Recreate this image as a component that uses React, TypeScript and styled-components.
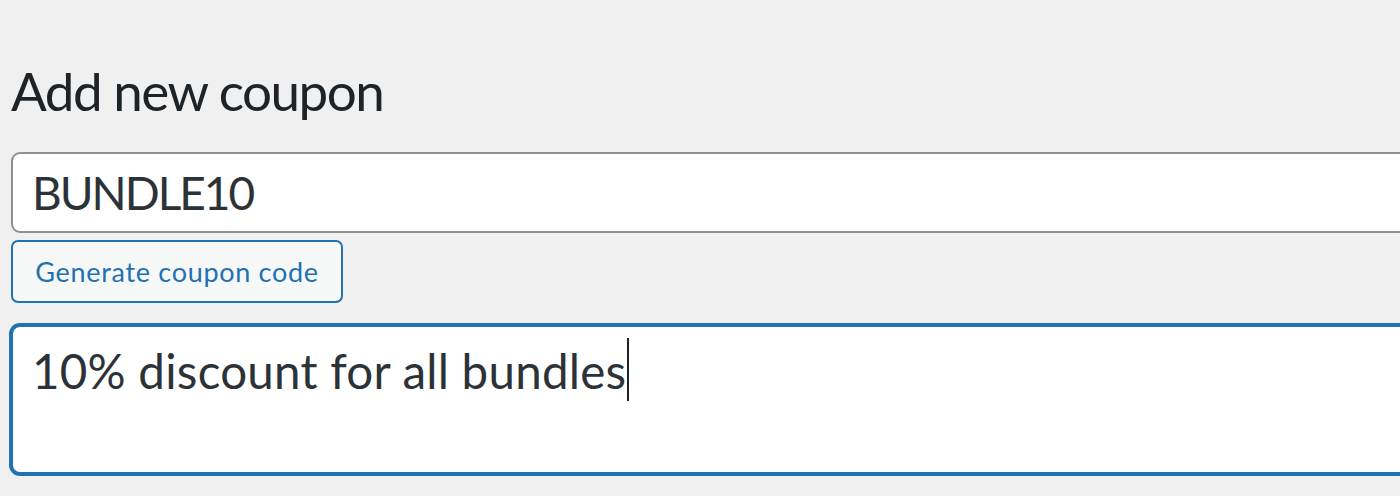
import { createGlobalStyle, styled } from "styled-components";

const GlobalStyle = createGlobalStyle`
    html, body {
        margin: 0;
        padding: 0;
        background: #f0f0f1;
        overflow: hidden;
    }
    #root {
        height: 496px;
        overflow: hidden;
    }
`;

const Page = styled.main`
    width: 1500px;
    padding: 58.5px 0 0 11px;
    font-family: Lato, "Open Sans", sans-serif;
    color: #1d2327;
`;

const Heading = styled.h1`
    margin: 0 0 29px 0;
    font-size: 53px;
    line-height: 64px;
    font-weight: 400;
    letter-spacing: -1.5px;
    color: #1d2327;
`;

const Field = styled.div`
    display: flex;
    flex-direction: column;
    align-items: flex-start;
`;

const CodeInput = styled.input`
    box-sizing: border-box;
    width: 100%;
    height: 81px;
    margin: 0;
    padding: 0 19px;
    border: 2px solid #8c8f94;
    border-radius: 9px;
    background: #fff;
    font-family: inherit;
    font-size: 46px;
    letter-spacing: -2px;
    color: #2c3338;
    outline: none;
`;

const SecondaryButton = styled.button`
    box-sizing: border-box;
    width: 332px;
    height: 63px;
    margin: 7.5px 0 0 0;
    padding: 0 10px;
    border: 2px solid #2271b1;
    border-radius: 7px;
    background: #f6f7f7;
    color: #2271b1;
    font-family: inherit;
    font-size: 27px;
    letter-spacing: 0.7px;
    line-height: 1;
    text-align: center;
    cursor: pointer;
`;

const Description = styled.div<{ $focused?: boolean }>`
    box-sizing: border-box;
    width: 100%;
    height: 149px;
    margin-top: 22px;
    padding: 11px 19px;
    border: 2px solid ${(p) => (p.$focused ? "#2271b1" : "#8c8f94")};
    border-radius: 9px;
    box-shadow: ${(p) => (p.$focused ? "0 0 0 2px #2271b1" : "none")};
    background: #fff;
    font-size: 47.5px;
    line-height: 57px;
    letter-spacing: 0.25px;
    color: #2c3338;
    white-space: pre-wrap;
`;

const Caret = styled.span`
    display: inline-block;
    width: 2px;
    height: 63px;
    margin-left: 1px;
    vertical-align: -12px;
    background: #1d2327;
`;

export default function App() {
    return (
        <>
            <GlobalStyle />
            <Page>
                <Heading>Add new coupon</Heading>
                <Field>
                    <CodeInput
                        type="text"
                        aria-label="Coupon code"
                        defaultValue="BUNDLE10"
                    />
                    <SecondaryButton type="button">
                        Generate coupon code
                    </SecondaryButton>
                    <Description
                        $focused
                        role="textbox"
                        aria-multiline="true"
                        aria-label="Description"
                    >
                        10% discount for all bundles
                        <Caret />
                    </Description>
                </Field>
            </Page>
        </>
    );
}
